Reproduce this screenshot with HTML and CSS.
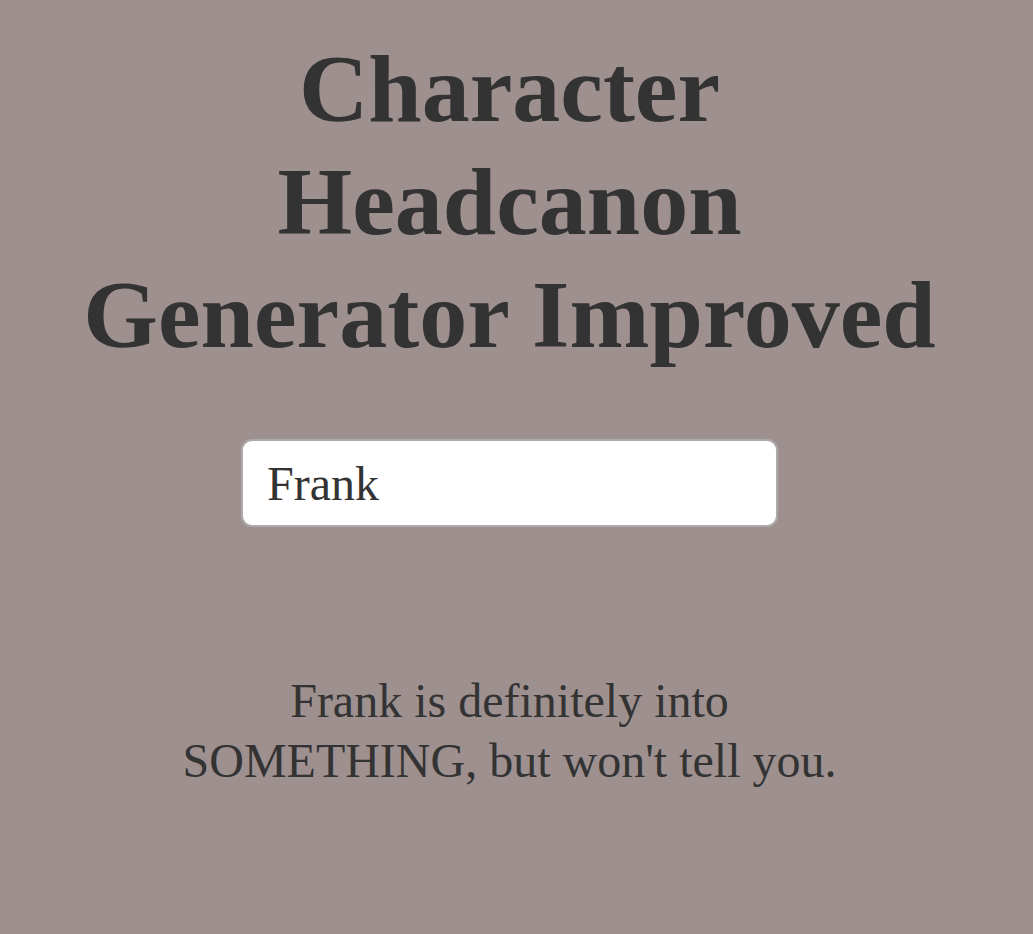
FILE: index.html
```html
<!DOCTYPE html>
<html>
<head>
    <meta charset="utf-8">
    <title>Character Headcanon Generator Improved</title>
    <link rel="stylesheet" href="styles.css">
</head>
<body>

<div class="page">
  <h1 class="title">Character Headcanon Generator Improved</h1>

  <form id="nameForm" class="name-form">
    <input type="text" id="charName" class="name-input" value="Frank">
  </form>

  <p id="result" class="result">Frank is definitely into SOMETHING, but won't tell you.</p>
</div>

</body>
</html>
```

FILE: styles.css
```css
body {
  background-color: #9d908f;
  color: #333333;
  font-family: "Liberation Serif", "Times New Roman", serif;
  margin: 0;
  padding: 0 14px 0 0;
}

.page {
  display: flex;
  flex-direction: column;
  align-items: center;
  text-align: center;
}

.title {
  font-size: 96px;
  font-weight: bold;
  line-height: 113px;
  max-width: 880px;
  margin: 32px 0 0 0;
}

.name-form {
  margin-top: 68px;
}

.name-input {
  box-sizing: border-box;
  width: 537px;
  height: 88px;
  padding: 0 24px;
  border: 2px solid #acaaaa;
  border-radius: 11px;
  background: #ffffff;
  color: #333333;
  font-family: "Liberation Serif", "Times New Roman", serif;
  font-size: 48px;
  outline: none;
}

.result {
  font-size: 48px;
  line-height: 60px;
  max-width: 700px;
  margin: 144px 0 0 0;
}
```
